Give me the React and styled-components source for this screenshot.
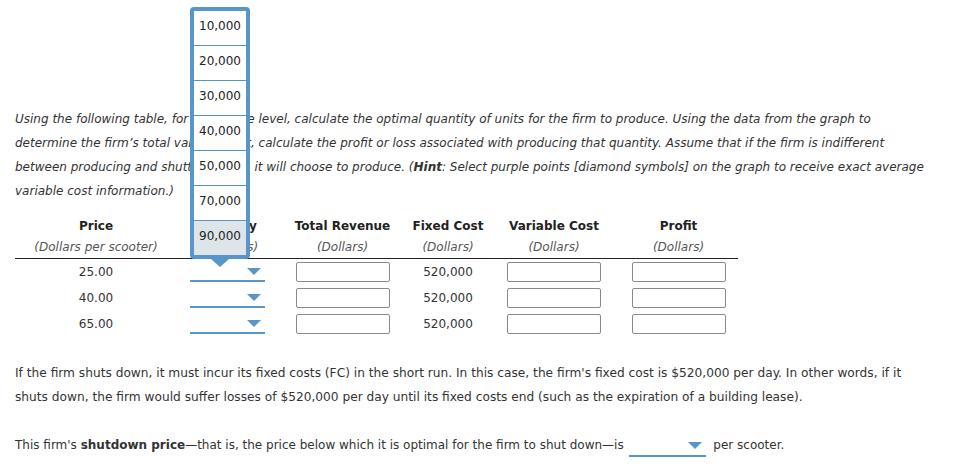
import styled, { createGlobalStyle } from 'styled-components'

const GlobalStyle = createGlobalStyle`
  body {
    margin: 0;
    background: #fff;
    font-family: "DejaVu Sans", Verdana, sans-serif;
    font-size: 12px;
    color: #333;
  }
`

const BLUE = '#5895c9'

const Page = styled.div`
  padding: 107px 15px 0;
  width: 918px;
`

const Intro = styled.p`
  margin: 0;
  font-style: italic;
  line-height: 24px;
  b {
    font-weight: bold;
  }
`

const Table = styled.div`
  margin-top: 12px;
  width: 723px;
`

const Row = styled.div`
  display: grid;
  grid-template-columns: 162px 101px 129px 82px 130px 119px;
  align-items: center;
  height: ${(p) => (p.$head ? 'auto' : '26px')};
  border-bottom: ${(p) => (p.$head ? '1px solid #222' : 'none')};
  padding-top: ${(p) => (p.$head ? '1px' : '0')};
`

const Cell = styled.div`
  display: flex;
  justify-content: center;
  align-items: center;
`

const HeadCell = styled.div`
  text-align: center;
  line-height: 21px;
`

const HeadTitle = styled.div`
  font-weight: bold;
  color: #222;
`

const HeadUnit = styled.div`
  font-style: italic;
  color: #555;
`

const TextBox = styled.div`
  width: 92px;
  height: 18px;
  border: 1px solid #8a8a8a;
  border-radius: 2px;
  background: #fff;
`

const Select = styled.span`
  position: relative;
  display: inline-flex;
  justify-content: flex-end;
  align-items: center;
  box-sizing: border-box;
  width: ${(p) => p.$w || 75}px;
  height: 20px;
  padding-right: 4px;
  border-bottom: 2px solid ${BLUE};
  vertical-align: middle;
  margin: ${(p) => (p.$inline ? '2px 4px 0 1px' : '0')};

  &::after {
    content: '';
    border-left: 7px solid transparent;
    border-right: 7px solid transparent;
    border-top: 7px solid ${BLUE};
  }
`

const SelectCell = styled(Cell)`
  justify-content: flex-start;
  padding-left: 13px;
`

const Popup = styled.ul`
  position: absolute;
  left: 0;
  bottom: 21px;
  width: 60px;
  box-sizing: border-box;
  margin: 0;
  padding: 0;
  list-style: none;
  border: 4px solid ${BLUE};
  border-radius: 4px;
  background: ${BLUE};
  z-index: 5;

  &::after {
    content: '';
    position: absolute;
    left: 50%;
    bottom: -12px;
    transform: translateX(-50%);
    border-left: 9px solid transparent;
    border-right: 9px solid transparent;
    border-top: 8px solid ${BLUE};
  }
`

const Option = styled.li`
  height: 34px;
  line-height: 31px;
  padding-left: 5px;
  color: #222;
  background: ${(p) => (p.$active ? '#dee5e8' : '#fff')};
  & + & {
    margin-top: 1px;
  }
`

const Para = styled.p`
  margin: ${(p) => p.$gap || 0}px 0 0;
  font-size: ${(p) => p.$size || 12}px;
  line-height: 24px;
`

const prices = ['25.00', '40.00', '65.00']
const quantities = ['10,000', '20,000', '30,000', '40,000', '50,000', '70,000', '90,000']

export default function App() {
  return (
    <>
      <GlobalStyle />
      <Page>
        <Intro>
          Using the following table, for each price level, calculate the optimal quantity of units for the firm to
          produce. Using the data from the graph to determine the firm’s total variable cost, calculate the profit or
          loss associated with producing that quantity. Assume that if the firm is indifferent between producing and
          shutting down, it will choose to produce. (<b>Hint</b>: Select purple points [diamond symbols] on the graph
          to receive exact average variable cost information.)
        </Intro>

        <Table>
          <Row $head>
            <HeadCell>
              <HeadTitle>Price</HeadTitle>
              <HeadUnit>(Dollars per scooter)</HeadUnit>
            </HeadCell>
            <HeadCell>
              <HeadTitle>Quantity</HeadTitle>
              <HeadUnit>(Scooters)</HeadUnit>
            </HeadCell>
            <HeadCell>
              <HeadTitle>Total Revenue</HeadTitle>
              <HeadUnit>(Dollars)</HeadUnit>
            </HeadCell>
            <HeadCell>
              <HeadTitle>Fixed Cost</HeadTitle>
              <HeadUnit>(Dollars)</HeadUnit>
            </HeadCell>
            <HeadCell>
              <HeadTitle>Variable Cost</HeadTitle>
              <HeadUnit>(Dollars)</HeadUnit>
            </HeadCell>
            <HeadCell>
              <HeadTitle>Profit</HeadTitle>
              <HeadUnit>(Dollars)</HeadUnit>
            </HeadCell>
          </Row>
          {prices.map((price, i) => (
            <Row key={price}>
              <Cell>{price}</Cell>
              <SelectCell>
                <Select>
                  {i === 0 && (
                    <Popup>
                      {quantities.map((q, k) => (
                        <Option key={q} $active={k === quantities.length - 1}>
                          {q}
                        </Option>
                      ))}
                    </Popup>
                  )}
                </Select>
              </SelectCell>
              <Cell>
                <TextBox />
              </Cell>
              <Cell>520,000</Cell>
              <Cell>
                <TextBox />
              </Cell>
              <Cell>
                <TextBox />
              </Cell>
            </Row>
          ))}
        </Table>

        <Para $gap={24} $size={12.2}>
          If the firm shuts down, it must incur its fixed costs (FC) in the short run. In this case, the firm's fixed
          cost is $520,000 per day. In other words, if it shuts down, the firm would suffer losses of $520,000 per day
          until its fixed costs end (such as the expiration of a building lease).
        </Para>
        <Para $gap={24}>
          This firm's <b>shutdown price</b>—that is, the price below which it is optimal for the firm to shut down—is{' '}
          <Select $inline $w={77} /> per scooter.
        </Para>
      </Page>
    </>
  )
}
